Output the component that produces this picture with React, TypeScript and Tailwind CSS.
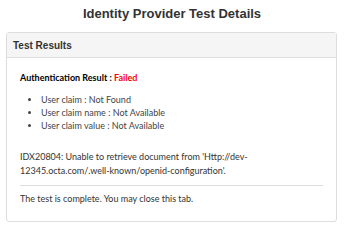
import React from "react";

export default function App() {
  const body = { fontFamily: 'Lato, "Segoe UI", sans-serif' };
  return (
    <div className="w-[344px] h-[228px] bg-white overflow-hidden text-[#333]">
      <h1 className="pt-[5px] h-[32px] text-center text-[13px] leading-[18px] font-bold text-[#333]" style={{ fontFamily: '"Liberation Sans", Arial, sans-serif' }}>
        Identity Provider Test Details
      </h1>
      <div className="ml-[6px] mr-[7px] border border-[#ddd] rounded-[3px] h-[190px]">
        <div className="h-[25px] bg-[#f5f5f5] border-b border-[#ddd] px-[6px] flex items-center text-[10px] font-bold text-[#333]" style={{ fontFamily: '"Liberation Sans", Arial, sans-serif' }}>
          Test Results
        </div>
        <div className="px-[13px] pt-[13px] text-[9px] leading-[13px]" style={body}>
          <div className="font-bold text-black">
            Authentication Result : <span className="text-[#ff0000]">Failed</span>
          </div>
          <ul className="mt-[9px] pl-[21px] list-disc text-[#444]">
            <li>User claim : Not Found</li>
            <li>User claim name : Not Available</li>
            <li>User claim value : Not Available</li>
          </ul>
          <p className="mt-[18px] leading-[14px] text-[#333]">
            IDX20804: Unable to retrieve document from 'Http://dev-12345.octa.com/.well-known/openid-configuration'.
          </p>
          <hr className="mt-[7px] border-t border-[#ddd]" />
          <p className="mt-[6px] text-[#333]">The test is complete. You may close this tab.</p>
        </div>
      </div>
    </div>
  );
}
